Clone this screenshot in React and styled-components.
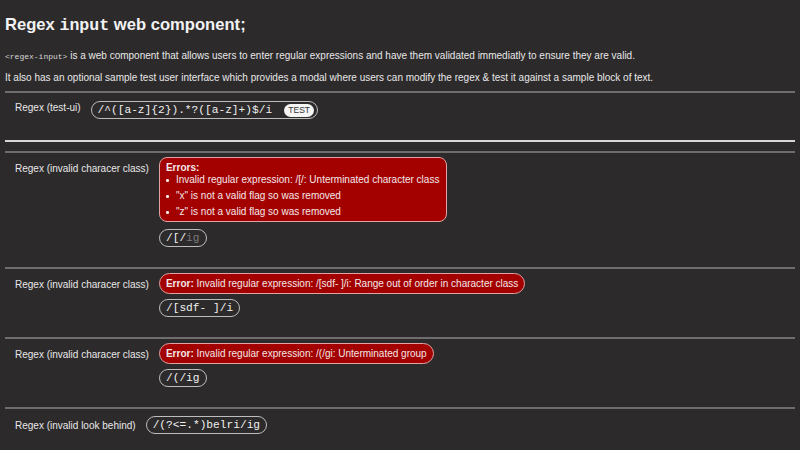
import React from "react";
import styled, { createGlobalStyle } from "styled-components";

const GlobalStyle = createGlobalStyle`
  body {
    margin: 0;
    background: #2c2a2b;
    color: #e8e8e8;
    font-family: "Liberation Sans", Arial, sans-serif;
    font-size: 10px;
  }
`;

const Page = styled.div`
  padding: 0 5px;
`;

const Title = styled.h1`
  margin: 15px 0 0 0;
  font-size: 16.6px;
  line-height: 20px;
  font-weight: 700;
  color: #f2f2f2;
`;

const TitleCode = styled.code`
  font-family: "Liberation Mono", "Courier New", monospace;
  font-weight: 700;
  font-size: 16.6px;
`;

const Para = styled.p`
  margin: ${(p) => p.$top}px 0 0 0;
  line-height: 14px;
`;

const InlineCode = styled.code`
  font-family: "Liberation Mono", "Courier New", monospace;
  font-size: 8px;
  color: #d8d8d8;
`;

const Divider = styled.hr`
  border: none;
  height: 2px;
  margin: ${(p) => p.$top || 0}px 0 0 0;
  background: ${(p) => (p.$bright ? "#d6d6d6" : "#6e6e6e")};
`;

const Row = styled.div`
  display: flex;
  align-items: flex-start;
  gap: 10px;
  padding: ${(p) => p.$top}px 10px ${(p) => p.$bottom}px 10px;
`;

const Label = styled.div`
  padding-top: ${(p) => p.$pad}px;
  line-height: 13px;
  white-space: nowrap;
`;

const Field = styled.div`
  display: flex;
  flex-direction: column;
  align-items: flex-start;
  gap: 5px;
`;

const RegexPill = styled.div`
  display: inline-flex;
  align-items: center;
  border: 1px solid #bdbdbd;
  border-radius: 10px;
  padding: 0 ${(p) => (p.$withButton ? 3 : 6)}px 0 6px;
  height: 16px;
  font-family: "Liberation Mono", "Courier New", monospace;
  font-size: 11.2px;
  color: #f0f0f0;
  white-space: pre;
`;

const Flags = styled.span`
  color: ${(p) => (p.$muted ? "#7a7a7a" : "inherit")};
`;

const TestButton = styled.button`
  margin-left: 12px;
  border: none;
  border-radius: 7px;
  background: #f4f4f4;
  color: #333;
  font-family: "Liberation Sans", Arial, sans-serif;
  font-size: 8.5px;
  height: 13px;
  width: 30px;
  padding: 0;
  line-height: 13px;
`;

const ErrorBox = styled.div`
  background: #a30000;
  border: 1px solid #e0a2a2;
  border-radius: ${(p) => (p.$list ? 8 : 11)}px;
  padding: ${(p) => (p.$list ? "6px 7px 1px 6px" : "3px 6px")};
  color: #f3e9e9;
  line-height: 13px;
  white-space: nowrap;
  margin-bottom: ${(p) => (p.$list ? 2 : 0)}px;
`;

const Strong = styled.strong`
  font-weight: 700;
`;

const Heading = styled.div`
  font-weight: 700;
  line-height: 8px;
`;

const ErrorList = styled.ul`
  list-style: none;
  margin: 0;
  padding: 0;
`;

const ErrorItem = styled.li`
  position: relative;
  padding-left: 10px;
  line-height: 16px;
  &::before {
    content: "";
    position: absolute;
    left: 0;
    top: 7px;
    width: 3px;
    height: 3px;
    border-radius: 1px;
    background: #f0e0e0;
  }
`;

const rows = [
  {
    label: "Regex (invalid characer class)",
    errors: [
      "Invalid regular expression: /[/: Unterminated character class",
      '"x" is not a valid flag so was removed',
      '"z" is not a valid flag so was removed',
    ],
    source: "[",
    flags: "ig",
    mutedFlags: true,
  },
  {
    label: "Regex (invalid characer class)",
    error: "Invalid regular expression: /[sdf- ]/i: Range out of order in character class",
    source: "[sdf- ]",
    flags: "i",
  },
  {
    label: "Regex (invalid characer class)",
    error: "Invalid regular expression: /(/gi: Unterminated group",
    source: "(",
    flags: "ig",
  },
  {
    label: "Regex (invalid look behind)",
    source: "(?<=.*)belri",
    flags: "ig",
  },
];

function Regex({ source, flags, mutedFlags, withButton }) {
  return (
    <RegexPill $withButton={withButton}>
      /{source}/<Flags $muted={mutedFlags}>{flags}</Flags>
      {withButton && <TestButton>TEST</TestButton>}
    </RegexPill>
  );
}

function App() {
  return (
    <>
      <GlobalStyle />
      <Page>
        <Title>
          Regex <TitleCode>input</TitleCode> web component;
        </Title>
        <Para $top={13}>
          <InlineCode>&lt;regex-input&gt;</InlineCode> is a web component that allows users to
          enter regular expressions and have them validated immediatly to ensure they are valid.
        </Para>
        <Para $top={7}>
          It also has an optional sample test user interface which provides a modal where users
          can modify the regex &amp; test it against a sample block of text.
        </Para>

        <Divider $top={6} />
        <Row $top={8} $bottom={21}>
          <Label $pad={0}>Regex (test-ui)</Label>
          <Regex source="^([a-z]{2}).*?([a-z]+)$" flags="i" withButton />
        </Row>
        <Divider $bright />
        <Divider $top={9} />

        {rows.map((row, i) => {
          const hasError = row.errors || row.error;
          return (
            <React.Fragment key={i}>
              {i > 0 && <Divider />}
              <Row $top={hasError ? 4 : 7} $bottom={20}>
                <Label $pad={hasError ? 5 : 3}>{row.label}</Label>
                <Field>
                  {row.errors && (
                    <ErrorBox $list>
                      <Heading>Errors:</Heading>
                      <ErrorList>
                        {row.errors.map((e) => (
                          <ErrorItem key={e}>{e}</ErrorItem>
                        ))}
                      </ErrorList>
                    </ErrorBox>
                  )}
                  {row.error && (
                    <ErrorBox>
                      <Strong>Error:</Strong> {row.error}
                    </ErrorBox>
                  )}
                  <Regex source={row.source} flags={row.flags} mutedFlags={row.mutedFlags} />
                </Field>
              </Row>
            </React.Fragment>
          );
        })}
      </Page>
    </>
  );
}

export default App;
